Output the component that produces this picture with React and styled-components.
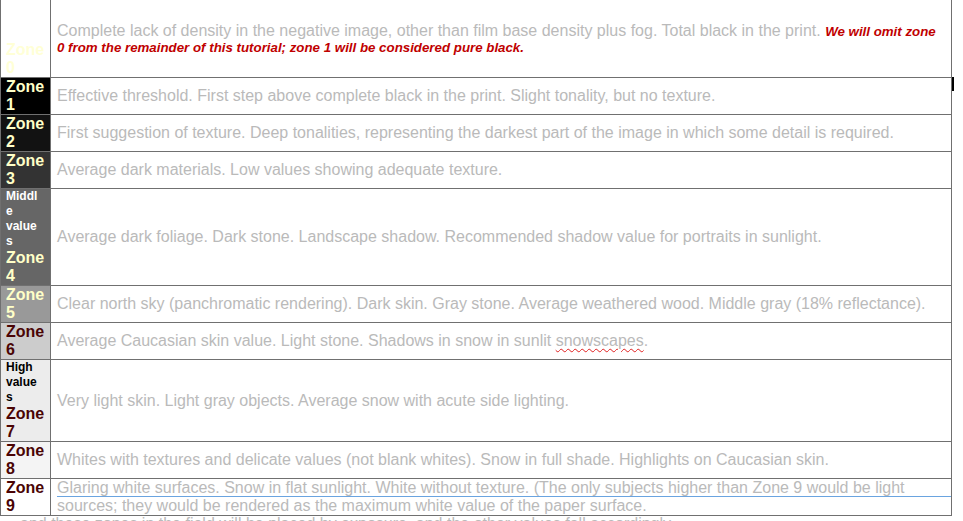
import React from 'react';
import styled, { createGlobalStyle } from 'styled-components';

const GlobalStyle = createGlobalStyle`
  html, body {
    margin: 0;
    padding: 0;
    background: #fff;
    overflow: hidden;
  }
  body {
    font-family: 'Liberation Sans', Arial, Helvetica, sans-serif;
  }
`;

const Table = styled.div`
  width: 952px;
  margin-top: -1px;
  border-left: 1px solid #707070;
  border-right: 1px solid #707070;
  border-top: 1px solid #707070;
  box-sizing: border-box;
  position: relative;
`;

const Row = styled.div`
  display: flex;
  border-bottom: 1px solid #707070;
  min-height: ${(p) => p.$minHeight || 0}px;
`;

const ZoneCell = styled.div`
  width: 50px;
  flex: none;
  box-sizing: border-box;
  padding-left: 5px;
  border-right: 1px solid #707070;
  background: ${(p) => p.$bg};
  display: flex;
  flex-direction: column;
  justify-content: ${(p) => (p.$bottom ? 'flex-end' : 'flex-start')};
`;

const ZoneName = styled.div`
  font-size: 16px;
  font-weight: bold;
  line-height: 18px;
  color: ${(p) => p.$color};
`;

const GroupName = styled.div`
  font-size: 12px;
  font-weight: bold;
  line-height: 15px;
  color: ${(p) => p.$color};
`;

const DescCell = styled.div`
  flex: 1;
  display: flex;
  align-items: center;
  padding: 0 12px 0 6px;
  font-size: 16px;
  line-height: ${(p) => p.$lineHeight || 18}px;
  color: #bababa;
  position: relative;

  &::after {
    content: '';
    display: ${(p) => (p.$guide ? 'block' : 'none')};
    position: absolute;
    left: 6px;
    right: 0;
    top: 17px;
    height: 1px;
    background: #6aa4e0;
  }
`;

const Note = styled.span`
  color: #c00000;
  font-size: 13.3px;
  font-weight: bold;
  font-style: italic;
`;

const Misspelled = styled.span`
  text-decoration: underline wavy #e02020;
  text-decoration-thickness: 1px;
  text-underline-offset: 2px;
`;

const Handle = styled.div`
  position: absolute;
  right: -3px;
  top: 77px;
  width: 2px;
  height: 14px;
  background: #000;
`;

const Trailing = styled.p`
  margin: 0;
  padding-left: 20px;
  font-size: 16px;
  line-height: 16px;
  color: #bababa;
  white-space: nowrap;
`;

const YELLOW = '#ffffc8';
const MAROON = '#4a0404';

const zones = [
  {
    bg: '#fff', color: '#ffffd6', bottom: true, minHeight: 77, lineHeight: 15,
    text: (
      <span>
        Complete lack of density in the negative image, other than film base density plus fog. Total black in the print.{' '}
        <Note>We will omit zone 0 from the remainder of this tutorial; zone 1 will be considered pure black.</Note>
      </span>
    ),
  },
  { bg: '#000', color: YELLOW, text: 'Effective threshold. First step above complete black in the print. Slight tonality, but no texture.' },
  { bg: '#121212', color: YELLOW, text: 'First suggestion of texture. Deep tonalities, representing the darkest part of the image in which some detail is required.' },
  { bg: '#333', color: YELLOW, text: 'Average dark materials. Low values showing adequate texture.' },
  {
    bg: '#666', color: YELLOW, group: ['Middl', 'e', 'value', 's'], groupColor: '#fff',
    text: 'Average dark foliage. Dark stone. Landscape shadow. Recommended shadow value for portraits in sunlight.',
  },
  { bg: '#999', color: YELLOW, text: 'Clear north sky (panchromatic rendering). Dark skin. Gray stone. Average weathered wood. Middle gray (18% reflectance).' },
  {
    bg: '#ccc', color: MAROON,
    text: (
      <span>
        Average Caucasian skin value. Light stone. Shadows in snow in sunlit <Misspelled>snowscapes</Misspelled>.
      </span>
    ),
  },
  {
    bg: '#ececec', color: MAROON, group: ['High', 'value', 's'], groupColor: '#000',
    text: 'Very light skin. Light gray objects. Average snow with acute side lighting.',
  },
  { bg: '#f4f4f4', color: MAROON, text: 'Whites with textures and delicate values (not blank whites). Snow in full shade. Highlights on Caucasian skin.' },
  {
    bg: '#fff', color: MAROON, guide: true,
    text: 'Glaring white surfaces. Snow in flat sunlight. White without texture. (The only subjects higher than Zone 9 would be light sources; they would be rendered as the maximum white value of the paper surface.',
  },
];

export default function App() {
  return (
    <>
      <GlobalStyle />
      <Table>
        {zones.map((z, i) => (
          <Row key={i} $minHeight={z.minHeight}>
            <ZoneCell $bg={z.bg} $bottom={z.bottom}>
              {z.group && z.group.map((g) => (
                <GroupName key={g} $color={z.groupColor}>{g}</GroupName>
              ))}
              <ZoneName $color={z.color}>Zone</ZoneName>
              <ZoneName $color={z.color}>{i}</ZoneName>
            </ZoneCell>
            <DescCell $lineHeight={z.lineHeight} $guide={z.guide}>
              {z.text}
            </DescCell>
          </Row>
        ))}
        <Handle />
      </Table>
      <Trailing>and these zones in the field will be placed by exposure, and the other values fall accordingly.</Trailing>
    </>
  );
}
